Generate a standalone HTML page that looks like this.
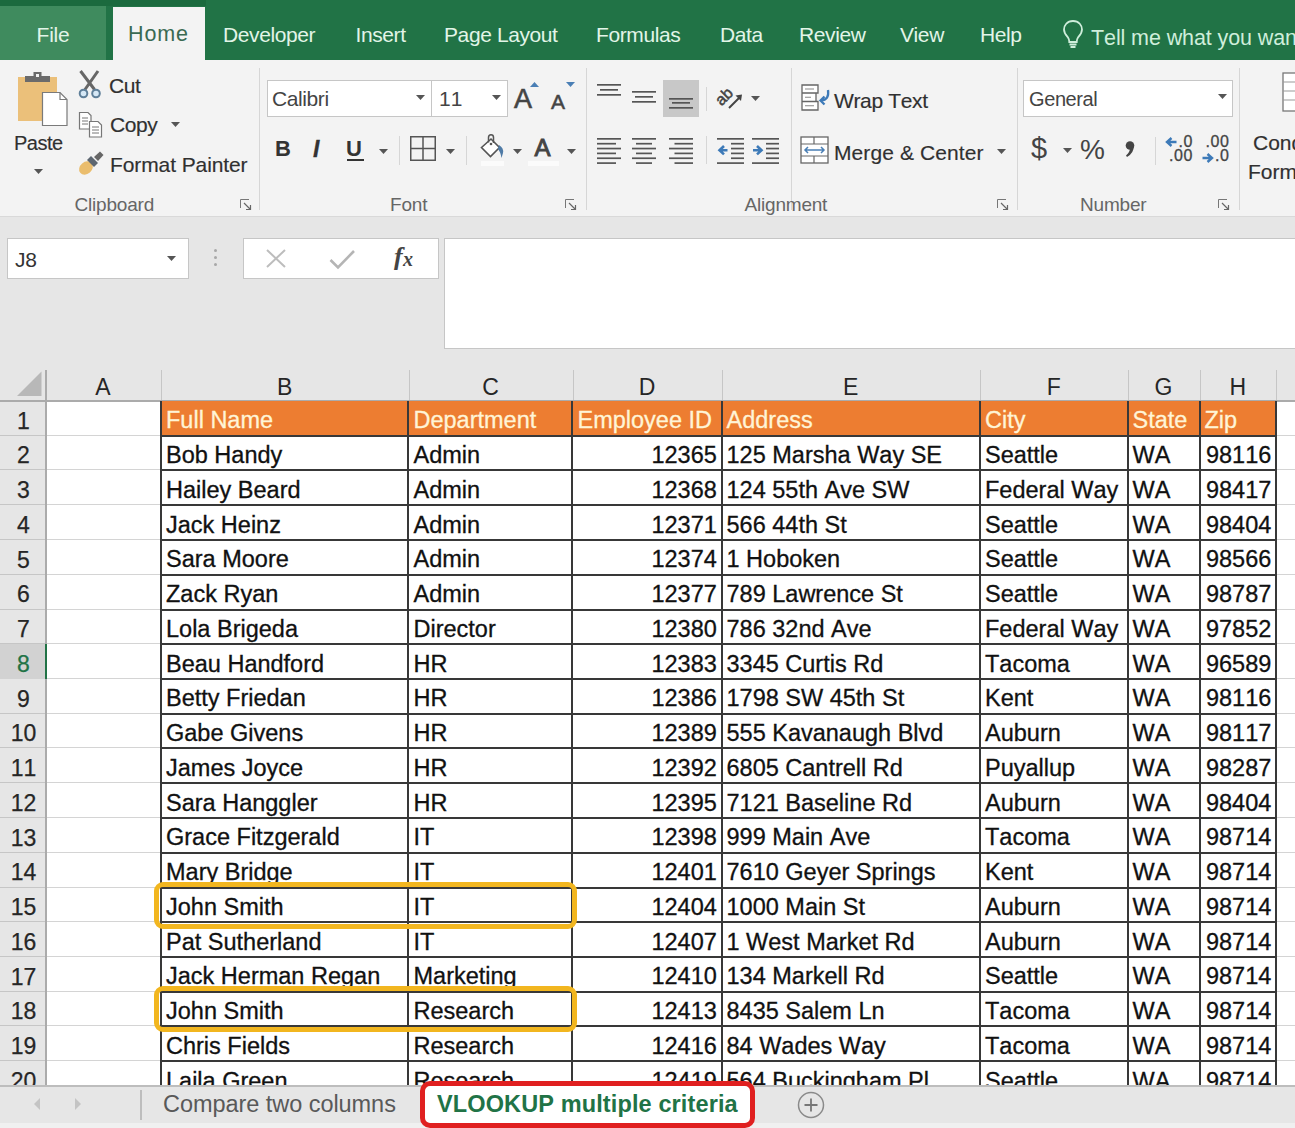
<!DOCTYPE html><html><head><meta charset="utf-8"><style>
*{margin:0;padding:0;box-sizing:border-box}
html,body{width:1295px;height:1128px;overflow:hidden;background:#e6e6e6;font-family:"Liberation Sans",sans-serif;position:relative}
.a{position:absolute}
.t{position:absolute;white-space:pre;line-height:1;font-kerning:none}
svg{position:absolute;overflow:visible}
</style></head><body>
<div class="a" style="left:0px;top:0px;width:1295px;height:60px;background:#217346"></div>
<div class="a" style="left:0px;top:0px;width:206px;height:6px;background:#1b6a3e"></div>
<div class="a" style="left:0px;top:6px;width:106px;height:54px;background:#3f8b5e"></div>
<div class="a" style="left:0px;top:60px;width:1295px;height:157px;background:#f3f3f3"></div>
<div class="a" style="left:113px;top:7px;width:92px;height:60px;background:#f3f3f3"></div>
<div class="a" style="left:0px;top:216px;width:1295px;height:1px;background:#d9d9d9"></div>
<div class="t" style="left:36.5px;top:23.92px;font-size:21px;color:#e2f5e8;font-weight:400;letter-spacing:-0.2px">File</div>
<div class="t" style="left:128px;top:23.50px;font-size:21.5px;color:#3a6a52;font-weight:400;letter-spacing:0.9px">Home</div>
<div class="t" style="left:223px;top:23.92px;font-size:21px;color:#e2f5e8;font-weight:400;letter-spacing:-0.4px">Developer</div>
<div class="t" style="left:355.5px;top:23.92px;font-size:21px;color:#e2f5e8;font-weight:400;letter-spacing:-0.4px">Insert</div>
<div class="t" style="left:444px;top:23.92px;font-size:21px;color:#e2f5e8;font-weight:400;letter-spacing:-0.4px">Page Layout</div>
<div class="t" style="left:596px;top:23.92px;font-size:21px;color:#e2f5e8;font-weight:400;letter-spacing:-0.4px">Formulas</div>
<div class="t" style="left:720px;top:23.92px;font-size:21px;color:#e2f5e8;font-weight:400;letter-spacing:-0.4px">Data</div>
<div class="t" style="left:799px;top:23.92px;font-size:21px;color:#e2f5e8;font-weight:400;letter-spacing:-0.4px">Review</div>
<div class="t" style="left:900px;top:23.92px;font-size:21px;color:#e2f5e8;font-weight:400;letter-spacing:-0.4px">View</div>
<div class="t" style="left:980px;top:23.92px;font-size:21px;color:#e2f5e8;font-weight:400;letter-spacing:-0.4px">Help</div>
<div class="t" style="left:1091px;top:27.80px;font-size:21.5px;color:#cfeedb;font-weight:400;letter-spacing:-0.1px">Tell me what you want to do</div>
<svg style="left:1060px;top:18px" width="26" height="32" viewBox="0 0 26 32"><path d="M13 3 C7 3 4 7.5 4 11.5 C4 15 6 17 8 19.5 C9 21 9.3 22 9.3 24 L16.7 24 C16.7 22 17 21 18 19.5 C20 17 22 15 22 11.5 C22 7.5 19 3 13 3 Z" fill="none" stroke="#cfeedb" stroke-width="1.8"/><path d="M9.5 26.5 H16.5 M10.5 29 H15.5" stroke="#cfeedb" stroke-width="1.8"/></svg>
<div class="a" style="left:259px;top:68px;width:1px;height:142px;background:#d6d6d6"></div>
<div class="a" style="left:585.5px;top:68px;width:1px;height:142px;background:#d6d6d6"></div>
<div class="a" style="left:790.5px;top:68px;width:1px;height:142px;background:#d6d6d6"></div>
<div class="a" style="left:1017px;top:68px;width:1px;height:142px;background:#d6d6d6"></div>
<div class="a" style="left:1239px;top:68px;width:1px;height:142px;background:#d6d6d6"></div>
<svg style="left:14px;top:68px" width="60" height="62" viewBox="0 0 60 62"><rect x="4" y="9" width="39" height="44" fill="#ebc07a"/><rect x="11" y="8" width="25" height="6" fill="#6b6b6b"/><rect x="19.5" y="4" width="8" height="6" fill="#6b6b6b"/><rect x="22" y="6" width="3" height="3" fill="#f3f3f3"/><path d="M28.5 24.5 H46 L53 31.5 V57.5 H28.5 Z" fill="#fff" stroke="#7a7a7a" stroke-width="1.2"/><path d="M46 24.5 V31.5 H53" fill="none" stroke="#7a7a7a" stroke-width="1.2"/></svg>
<div class="t" style="left:14px;top:133.07px;font-size:20px;color:#303030;font-weight:400;-webkit-text-stroke:0.15px #303030;letter-spacing:-0.5px">Paste</div>
<svg style="left:34px;top:168.5px" width="10" height="6" viewBox="0 0 10 6"><path d="M0 0 H9 L4.5 5 Z" fill="#555"/></svg>
<svg style="left:77px;top:70px" width="26" height="30" viewBox="0 0 26 30"><path d="M3.5 1 L17.5 19.5 M21 1 L8 19.5" stroke="#666" stroke-width="3" fill="none"/><circle cx="6.5" cy="23.5" r="3.8" fill="#d6e8f6" stroke="#5f7f99" stroke-width="2"/><circle cx="19" cy="23.5" r="3.8" fill="#d6e8f6" stroke="#5f7f99" stroke-width="2"/></svg>
<div class="t" style="left:109px;top:75.22px;font-size:21px;color:#303030;font-weight:400;-webkit-text-stroke:0.15px #303030;letter-spacing:-0.4px">Cut</div>
<svg style="left:78px;top:111px" width="28" height="28" viewBox="0 0 28 28"><path d="M1.5 1.5 H10 L13 4.5 V18 H1.5 Z" fill="#fff" stroke="#777" stroke-width="1.2"/><path d="M4 7 H10 M4 10 H10 M4 13 H10" stroke="#777" stroke-width="1"/><path d="M11.5 10.5 H20 L23.5 14 V26 H11.5 Z" fill="#fff" stroke="#777" stroke-width="1.2"/><path d="M14 16 H21 M14 19 H21 M14 22 H21" stroke="#777" stroke-width="1"/></svg>
<div class="t" style="left:110px;top:114.22px;font-size:21px;color:#303030;font-weight:400;-webkit-text-stroke:0.15px #303030;letter-spacing:-0.4px">Copy</div>
<svg style="left:171px;top:122px" width="10" height="6" viewBox="0 0 10 6"><path d="M0 0 H9 L4.5 5 Z" fill="#555"/></svg>
<svg style="left:78px;top:151px" width="28" height="26" viewBox="0 0 28 26"><ellipse cx="8" cy="17" rx="7.5" ry="6" transform="rotate(-40 8 17)" fill="#eabd6d"/><path d="M9 9 L16 16 L20 12 L13 5 Z" fill="#5d6670"/><path d="M16 6 L22 0.5 L25.5 4 L20 10 Z" fill="#666"/></svg>
<div class="t" style="left:110px;top:154.22px;font-size:21px;color:#303030;font-weight:400;-webkit-text-stroke:0.15px #303030;letter-spacing:-0.1px">Format Painter</div>
<div class="t" style="left:74.5px;top:194.51px;font-size:19px;color:#666;font-weight:400;letter-spacing:-0.2px">Clipboard</div>
<svg style="left:240px;top:199px" width="12" height="12" viewBox="0 0 12 12"><path d="M0.5 9 V0.5 H9" fill="none" stroke="#777" stroke-width="1"/><path d="M4 4 L10.5 10.5 M6 10.5 H10.5 V6" fill="none" stroke="#666" stroke-width="1.2"/></svg>
<div class="a" style="left:266.5px;top:79.5px;width:165px;height:37px;background:#fff;border:1px solid #c6c6c6"></div>
<div class="a" style="left:431px;top:79.5px;width:77px;height:37px;background:#fff;border:1px solid #c6c6c6"></div>
<div class="t" style="left:272px;top:88.22px;font-size:21px;color:#444;font-weight:400;letter-spacing:-0.4px">Calibri</div>
<div class="t" style="left:439px;top:88.22px;font-size:21px;color:#444;font-weight:400;">11</div>
<svg style="left:415.5px;top:94.5px" width="10" height="6" viewBox="0 0 10 6"><path d="M0 0 H9 L4.5 5 Z" fill="#555"/></svg>
<svg style="left:492.0px;top:94.5px" width="10" height="6" viewBox="0 0 10 6"><path d="M0 0 H9 L4.5 5 Z" fill="#555"/></svg>
<div class="t" style="left:514px;top:85.74px;font-size:27px;color:#444;font-weight:400;-webkit-text-stroke:0.6px #444">A</div>
<svg style="left:530px;top:82px" width="10" height="6" viewBox="0 0 10 6"><path d="M0 5 L4.5 0 L9 5 Z" fill="#4a7fb5"/></svg>
<div class="t" style="left:551px;top:90.82px;font-size:21px;color:#444;font-weight:400;-webkit-text-stroke:0.5px #444">A</div>
<svg style="left:566px;top:82px" width="10" height="6" viewBox="0 0 10 6"><path d="M0 0 H9 L4.5 5 Z" fill="#4a7fb5"/></svg>
<div class="t" style="left:275px;top:138.37px;font-size:22px;color:#333;font-weight:700;">B</div>
<div class="t" style="left:313px;top:137.53px;font-size:23px;color:#333;font-weight:700;font-style:italic;-webkit-text-stroke:0.3px #333">I</div>
<div class="t" style="left:346px;top:138.37px;font-size:22px;color:#333;font-weight:700;">U</div>
<div class="a" style="left:347px;top:159px;width:17px;height:2px;background:#333"></div>
<svg style="left:378.5px;top:148.5px" width="10" height="6" viewBox="0 0 10 6"><path d="M0 0 H9 L4.5 5 Z" fill="#555"/></svg>
<div class="a" style="left:398.5px;top:136px;width:1px;height:29px;background:#d6d6d6"></div>
<svg style="left:410px;top:136px" width="27" height="26" viewBox="0 0 27 26"><rect x="0.75" y="0.75" width="24.5" height="23.5" fill="none" stroke="#555" stroke-width="1.5"/><path d="M13 1 V24 M1 12.5 H25" stroke="#555" stroke-width="1.5"/></svg>
<svg style="left:446.0px;top:148.5px" width="10" height="6" viewBox="0 0 10 6"><path d="M0 0 H9 L4.5 5 Z" fill="#555"/></svg>
<div class="a" style="left:466px;top:136px;width:1px;height:29px;background:#d6d6d6"></div>
<svg style="left:480px;top:134px" width="26" height="30" viewBox="0 0 26 30"><path d="M1.5 13.5 L11 5 L19.5 13.5 L10.5 22.5 Z" fill="#fff" stroke="#555" stroke-width="1.6"/><path d="M8.5 8.5 V3.5 Q8.5 0.8 11 0.8 Q13.5 0.8 13.5 3.5 V9" fill="none" stroke="#555" stroke-width="1.5"/><circle cx="11" cy="10" r="1.3" fill="#555"/><path d="M19 11 Q24 14 23 19 L21.5 24 Q20.5 18 18 15 Z" fill="#4f7ba6"/></svg>
<div class="a" style="left:481px;top:161px;width:23px;height:5px;background:#fbfbfb"></div>
<svg style="left:513.0px;top:148.5px" width="10" height="6" viewBox="0 0 10 6"><path d="M0 0 H9 L4.5 5 Z" fill="#555"/></svg>
<div class="t" style="left:534.5px;top:135.68px;font-size:24px;color:#444;font-weight:400;-webkit-text-stroke:0.9px #444">A</div>
<div class="a" style="left:528px;top:161px;width:31px;height:5px;background:#fbfbfb"></div>
<svg style="left:567.0px;top:148.5px" width="10" height="6" viewBox="0 0 10 6"><path d="M0 0 H9 L4.5 5 Z" fill="#555"/></svg>
<div class="t" style="left:390px;top:194.91px;font-size:19px;color:#666;font-weight:400;letter-spacing:-0.2px">Font</div>
<svg style="left:565px;top:199px" width="12" height="12" viewBox="0 0 12 12"><path d="M0.5 9 V0.5 H9" fill="none" stroke="#777" stroke-width="1"/><path d="M4 4 L10.5 10.5 M6 10.5 H10.5 V6" fill="none" stroke="#666" stroke-width="1.2"/></svg>
<svg style="left:597px;top:83px" width="40" height="40" viewBox="0 0 40 40"><rect x="0" y="1" width="24" height="1.7" fill="#555"/><rect x="3" y="6" width="18" height="1.7" fill="#555"/><rect x="0" y="11" width="24" height="1.7" fill="#555"/></svg>
<svg style="left:632px;top:90px" width="40" height="40" viewBox="0 0 40 40"><rect x="0" y="1" width="24" height="1.7" fill="#555"/><rect x="3" y="6" width="18" height="1.7" fill="#555"/><rect x="0" y="11" width="24" height="1.7" fill="#555"/></svg>
<div class="a" style="left:663px;top:79.5px;width:36px;height:37px;background:#c8c8c8"></div>
<svg style="left:669px;top:97px" width="40" height="40" viewBox="0 0 40 40"><rect x="0" y="1" width="24" height="1.7" fill="#555"/><rect x="3" y="5" width="18" height="1.7" fill="#555"/><rect x="0" y="10" width="24" height="1.7" fill="#555"/></svg>
<div class="a" style="left:705.5px;top:87px;width:1px;height:24px;background:#d6d6d6"></div>
<svg style="left:716px;top:84px" width="30" height="30" viewBox="0 0 30 30"><text x="0" y="0" font-size="16" font-family="Liberation Sans" fill="#444" stroke="#444" stroke-width="0.5" transform="translate(5.5,22.5) rotate(-45)">ab</text><path d="M13 24 L24.5 12.5" fill="none" stroke="#444" stroke-width="2"/><path d="M19.5 11.5 L26 10.5 L25 17 Z" fill="#444"/></svg>
<svg style="left:750.5px;top:95.5px" width="10" height="6" viewBox="0 0 10 6"><path d="M0 0 H9 L4.5 5 Z" fill="#555"/></svg>
<svg style="left:597px;top:137.5px" width="40" height="40" viewBox="0 0 40 40"><rect x="0" y="0" width="24" height="1.7" fill="#555"/><rect x="0" y="4.85" width="19" height="1.7" fill="#555"/><rect x="0" y="9.7" width="24" height="1.7" fill="#555"/><rect x="0" y="14.55" width="19" height="1.7" fill="#555"/><rect x="0" y="19.4" width="24" height="1.7" fill="#555"/><rect x="0" y="24.25" width="19" height="1.7" fill="#555"/></svg>
<svg style="left:632px;top:137.5px" width="40" height="40" viewBox="0 0 40 40"><rect x="0" y="0" width="24" height="1.7" fill="#555"/><rect x="4" y="4.85" width="16" height="1.7" fill="#555"/><rect x="0" y="9.7" width="24" height="1.7" fill="#555"/><rect x="4" y="14.55" width="16" height="1.7" fill="#555"/><rect x="0" y="19.4" width="24" height="1.7" fill="#555"/><rect x="4" y="24.25" width="16" height="1.7" fill="#555"/></svg>
<svg style="left:669px;top:137.5px" width="40" height="40" viewBox="0 0 40 40"><rect x="0" y="0" width="24" height="1.7" fill="#555"/><rect x="5.5" y="4.85" width="18.5" height="1.7" fill="#555"/><rect x="0" y="9.7" width="24" height="1.7" fill="#555"/><rect x="5.5" y="14.55" width="18.5" height="1.7" fill="#555"/><rect x="0" y="19.4" width="24" height="1.7" fill="#555"/><rect x="5.5" y="24.25" width="18.5" height="1.7" fill="#555"/></svg>
<div class="a" style="left:705.5px;top:136px;width:1px;height:28px;background:#d6d6d6"></div>
<svg style="left:716.5px;top:137.5px" width="30" height="26" viewBox="0 0 30 26"><rect x="0" y="0" width="27" height="1.7" fill="#555"/><rect x="14" y="4.85" width="13" height="1.7" fill="#555"/><rect x="14" y="9.7" width="13" height="1.7" fill="#555"/><rect x="14" y="14.55" width="13" height="1.7" fill="#555"/><rect x="14" y="19.4" width="13" height="1.7" fill="#555"/><rect x="0" y="24.25" width="27" height="1.7" fill="#555"/><path d="M10.5 12.2 H3 M7 8 L2.5 12.2 L7 16.4" fill="none" stroke="#3d7ab8" stroke-width="2.6"/></svg>
<svg style="left:752px;top:137.5px" width="30" height="26" viewBox="0 0 30 26"><rect x="0" y="0" width="27" height="1.7" fill="#555"/><rect x="14" y="4.85" width="13" height="1.7" fill="#555"/><rect x="14" y="9.7" width="13" height="1.7" fill="#555"/><rect x="14" y="14.55" width="13" height="1.7" fill="#555"/><rect x="14" y="19.4" width="13" height="1.7" fill="#555"/><rect x="0" y="24.25" width="27" height="1.7" fill="#555"/><path d="M1 12.2 H9 M5 8 L9.5 12.2 L5 16.4" fill="none" stroke="#3d7ab8" stroke-width="2.6"/></svg>
<svg style="left:801px;top:84px" width="32" height="30" viewBox="0 0 32 30"><path d="M1 1 H17 V9 H1 Z M1 9 H15 V17.5 H1 Z M1 17.5 H17 V26 H1 Z" fill="#fff" stroke="#666" stroke-width="1.3"/><path d="M4 5 H13 M4 13.2 H10 M4 21.7 H13" stroke="#888" stroke-width="1.1"/><path d="M27 6 Q28.5 16 20 16.5 M23.5 12.5 L19.5 16.5 L23.5 20.5" fill="none" stroke="#3d7ab8" stroke-width="2.3"/></svg>
<div class="t" style="left:834px;top:89.82px;font-size:21px;color:#303030;font-weight:400;-webkit-text-stroke:0.15px #303030;letter-spacing:-0.35px">Wrap Text</div>
<svg style="left:800px;top:136px" width="30" height="29" viewBox="0 0 30 29"><rect x="1" y="1" width="27" height="26" fill="#fff" stroke="#666" stroke-width="1.3"/><path d="M1 8 H28 M1 20 H28 M14 1 V8 M14 20 V27" stroke="#666" stroke-width="1.2"/><path d="M5 14 H24 M8 11 L5 14 L8 17 M21 11 L24 14 L21 17" fill="none" stroke="#4a7fb5" stroke-width="1.5"/></svg>
<div class="t" style="left:834px;top:142.42px;font-size:21px;color:#303030;font-weight:400;-webkit-text-stroke:0.15px #303030;letter-spacing:0.1px">Merge &amp; Center</div>
<svg style="left:996.5px;top:148.5px" width="10" height="6" viewBox="0 0 10 6"><path d="M0 0 H9 L4.5 5 Z" fill="#555"/></svg>
<div class="t" style="left:744.5px;top:194.91px;font-size:19px;color:#666;font-weight:400;letter-spacing:-0.2px">Alignment</div>
<svg style="left:997px;top:199px" width="12" height="12" viewBox="0 0 12 12"><path d="M0.5 9 V0.5 H9" fill="none" stroke="#777" stroke-width="1"/><path d="M4 4 L10.5 10.5 M6 10.5 H10.5 V6" fill="none" stroke="#666" stroke-width="1.2"/></svg>
<div class="a" style="left:1023px;top:79.5px;width:210px;height:37.5px;background:#fff;border:1px solid #c6c6c6"></div>
<div class="t" style="left:1029px;top:89.27px;font-size:20px;color:#444;font-weight:400;letter-spacing:-0.4px">General</div>
<svg style="left:1218.0px;top:94.0px" width="10" height="6" viewBox="0 0 10 6"><path d="M0 0 H9 L4.5 5 Z" fill="#555"/></svg>
<div class="t" style="left:1031px;top:133.95px;font-size:29px;color:#444;font-weight:400;">$</div>
<svg style="left:1063.0px;top:147.5px" width="10" height="6" viewBox="0 0 10 6"><path d="M0 0 H9 L4.5 5 Z" fill="#555"/></svg>
<div class="t" style="left:1080px;top:136.29px;font-size:28px;color:#444;font-weight:400;">%</div>
<svg style="left:1122px;top:140px" width="16" height="20" viewBox="0 0 16 20"><circle cx="8" cy="5.5" r="4.3" fill="#444"/><path d="M11.8 6 Q12 13 5 17 L4 15.5 Q8 12 8 8 Z" fill="#444"/></svg>
<div class="a" style="left:1155px;top:137px;width:1px;height:28px;background:#d6d6d6"></div>
<svg style="left:1165px;top:134px" width="30" height="30" viewBox="0 0 30 30"><path d="M11.5 8 H2.5 M6.5 4 L2 8 L6.5 12" fill="none" stroke="#3d7ab8" stroke-width="2.4"/></svg>
<div class="t" style="right:102px;top:133.95px;font-size:16px;color:#444;font-weight:400;letter-spacing:0.6px;-webkit-text-stroke:0.3px #444">.0</div>
<div class="t" style="right:102px;top:148.45px;font-size:16px;color:#444;font-weight:400;letter-spacing:0.6px;-webkit-text-stroke:0.3px #444">.00</div>
<div class="t" style="right:65.5px;top:133.95px;font-size:16px;color:#444;font-weight:400;letter-spacing:0.6px;-webkit-text-stroke:0.3px #444">.00</div>
<svg style="left:1201px;top:150px" width="30" height="30" viewBox="0 0 30 30"><path d="M1.5 8 H10.5 M6.5 4 L11 8 L6.5 12" fill="none" stroke="#3d7ab8" stroke-width="2.4"/></svg>
<div class="t" style="right:65.5px;top:148.45px;font-size:16px;color:#444;font-weight:400;letter-spacing:0.6px;-webkit-text-stroke:0.3px #444">.0</div>
<div class="t" style="left:1080px;top:194.61px;font-size:19px;color:#666;font-weight:400;letter-spacing:-0.2px">Number</div>
<svg style="left:1218px;top:199px" width="12" height="12" viewBox="0 0 12 12"><path d="M0.5 9 V0.5 H9" fill="none" stroke="#777" stroke-width="1"/><path d="M4 4 L10.5 10.5 M6 10.5 H10.5 V6" fill="none" stroke="#666" stroke-width="1.2"/></svg>
<svg style="left:1282px;top:72px" width="30" height="40" viewBox="0 0 30 40"><rect x="1" y="1" width="24" height="38" fill="#fff" stroke="#777" stroke-width="1.3"/><path d="M1 10 H25 M1 19 H25 M1 28 H25" stroke="#999" stroke-width="1"/></svg>
<div class="t" style="left:1253px;top:132.22px;font-size:21px;color:#303030;font-weight:400;-webkit-text-stroke:0.15px #303030">Cond</div>
<div class="t" style="left:1248px;top:161.02px;font-size:21px;color:#303030;font-weight:400;-webkit-text-stroke:0.15px #303030">Form</div>
<div class="a" style="left:7px;top:237.5px;width:182px;height:41.5px;background:#fff;border:1px solid #c6c6c6"></div>
<div class="t" style="left:15px;top:249.22px;font-size:21px;color:#333;font-weight:400;letter-spacing:-0.3px">J8</div>
<svg style="left:167.0px;top:255.5px" width="10" height="6" viewBox="0 0 10 6"><path d="M0 0 H9 L4.5 5 Z" fill="#555"/></svg>
<div class="a" style="left:213.5px;top:248.5px;width:3px;height:3px;background:#a8a8a8;border-radius:50%"></div>
<div class="a" style="left:213.5px;top:255.5px;width:3px;height:3px;background:#a8a8a8;border-radius:50%"></div>
<div class="a" style="left:213.5px;top:262.5px;width:3px;height:3px;background:#a8a8a8;border-radius:50%"></div>
<div class="a" style="left:243px;top:237.5px;width:196px;height:41.5px;background:#fff;border:1px solid #c6c6c6"></div>
<svg style="left:266px;top:249px" width="20" height="19" viewBox="0 0 20 19"><path d="M1 1 L19 18 M19 1 L1 18" stroke="#bdbdbd" stroke-width="2"/></svg>
<svg style="left:329px;top:249px" width="27" height="21" viewBox="0 0 27 21"><path d="M1.5 11 L9 18.5 L25 2" fill="none" stroke="#b5b5b5" stroke-width="2.6"/></svg>
<div class="t" style="left:394px;top:243.99px;font-size:26px;color:#444;font-weight:700;font-family:Liberation Serif;font-style:italic">f</div>
<div class="t" style="left:403px;top:248.57px;font-size:20px;color:#444;font-weight:700;font-family:Liberation Serif;font-style:italic">x</div>
<div class="a" style="left:444px;top:237.5px;width:860px;height:111px;background:#fff;border:1px solid #c6c6c6"></div>
<div class="a" style="left:0px;top:370px;width:1295px;height:715px;background:#fff"></div>
<div class="a" style="left:0px;top:370px;width:1295px;height:31px;background:#e6e6e6"></div>
<div class="a" style="left:0px;top:370px;width:45px;height:715px;background:#e6e6e6"></div>
<svg style="left:17px;top:371px" width="26" height="26" viewBox="0 0 26 26"><path d="M24.5 0.5 V25 H0 Z" fill="#b8b8b8"/></svg>
<div class="a" style="left:45px;top:370px;width:1px;height:31px;background:#c6c6c6"></div>
<div class="a" style="left:161px;top:370px;width:1px;height:31px;background:#c6c6c6"></div>
<div class="a" style="left:408.5px;top:370px;width:1px;height:31px;background:#c6c6c6"></div>
<div class="a" style="left:572.5px;top:370px;width:1px;height:31px;background:#c6c6c6"></div>
<div class="a" style="left:721.5px;top:370px;width:1px;height:31px;background:#c6c6c6"></div>
<div class="a" style="left:980px;top:370px;width:1px;height:31px;background:#c6c6c6"></div>
<div class="a" style="left:1127.5px;top:370px;width:1px;height:31px;background:#c6c6c6"></div>
<div class="a" style="left:1199.5px;top:370px;width:1px;height:31px;background:#c6c6c6"></div>
<div class="a" style="left:1276px;top:370px;width:1px;height:31px;background:#c6c6c6"></div>
<div class="t" style="left:-97.0px;width:400px;text-align:center;top:375.53px;font-size:23px;color:#262626;font-weight:400;">A</div>
<div class="t" style="left:84.75px;width:400px;text-align:center;top:375.53px;font-size:23px;color:#262626;font-weight:400;">B</div>
<div class="t" style="left:290.5px;width:400px;text-align:center;top:375.53px;font-size:23px;color:#262626;font-weight:400;">C</div>
<div class="t" style="left:447.0px;width:400px;text-align:center;top:375.53px;font-size:23px;color:#262626;font-weight:400;">D</div>
<div class="t" style="left:650.75px;width:400px;text-align:center;top:375.53px;font-size:23px;color:#262626;font-weight:400;">E</div>
<div class="t" style="left:853.75px;width:400px;text-align:center;top:375.53px;font-size:23px;color:#262626;font-weight:400;">F</div>
<div class="t" style="left:963.5px;width:400px;text-align:center;top:375.53px;font-size:23px;color:#262626;font-weight:400;">G</div>
<div class="t" style="left:1037.75px;width:400px;text-align:center;top:375.53px;font-size:23px;color:#262626;font-weight:400;">H</div>
<div class="a" style="left:0px;top:400px;width:1295px;height:1.5px;background:#ababab"></div>
<div class="a" style="left:45px;top:370px;width:1.5px;height:715px;background:#ababab"></div>
<div class="a" style="left:46.5px;top:435px;width:114.5px;height:1px;background:#d4d4d4"></div>
<div class="a" style="left:1276px;top:435px;width:20px;height:1px;background:#d4d4d4"></div>
<div class="a" style="left:0px;top:435px;width:45px;height:1px;background:#c6c6c6"></div>
<div class="a" style="left:46.5px;top:469px;width:114.5px;height:1px;background:#d4d4d4"></div>
<div class="a" style="left:1276px;top:469px;width:20px;height:1px;background:#d4d4d4"></div>
<div class="a" style="left:0px;top:469px;width:45px;height:1px;background:#c6c6c6"></div>
<div class="a" style="left:46.5px;top:504px;width:114.5px;height:1px;background:#d4d4d4"></div>
<div class="a" style="left:1276px;top:504px;width:20px;height:1px;background:#d4d4d4"></div>
<div class="a" style="left:0px;top:504px;width:45px;height:1px;background:#c6c6c6"></div>
<div class="a" style="left:46.5px;top:539px;width:114.5px;height:1px;background:#d4d4d4"></div>
<div class="a" style="left:1276px;top:539px;width:20px;height:1px;background:#d4d4d4"></div>
<div class="a" style="left:0px;top:539px;width:45px;height:1px;background:#c6c6c6"></div>
<div class="a" style="left:46.5px;top:574px;width:114.5px;height:1px;background:#d4d4d4"></div>
<div class="a" style="left:1276px;top:574px;width:20px;height:1px;background:#d4d4d4"></div>
<div class="a" style="left:0px;top:574px;width:45px;height:1px;background:#c6c6c6"></div>
<div class="a" style="left:46.5px;top:609px;width:114.5px;height:1px;background:#d4d4d4"></div>
<div class="a" style="left:1276px;top:609px;width:20px;height:1px;background:#d4d4d4"></div>
<div class="a" style="left:0px;top:609px;width:45px;height:1px;background:#c6c6c6"></div>
<div class="a" style="left:46.5px;top:643px;width:114.5px;height:1px;background:#d4d4d4"></div>
<div class="a" style="left:1276px;top:643px;width:20px;height:1px;background:#d4d4d4"></div>
<div class="a" style="left:0px;top:643px;width:45px;height:1px;background:#c6c6c6"></div>
<div class="a" style="left:46.5px;top:678px;width:114.5px;height:1px;background:#d4d4d4"></div>
<div class="a" style="left:1276px;top:678px;width:20px;height:1px;background:#d4d4d4"></div>
<div class="a" style="left:0px;top:678px;width:45px;height:1px;background:#c6c6c6"></div>
<div class="a" style="left:46.5px;top:713px;width:114.5px;height:1px;background:#d4d4d4"></div>
<div class="a" style="left:1276px;top:713px;width:20px;height:1px;background:#d4d4d4"></div>
<div class="a" style="left:0px;top:713px;width:45px;height:1px;background:#c6c6c6"></div>
<div class="a" style="left:46.5px;top:747px;width:114.5px;height:1px;background:#d4d4d4"></div>
<div class="a" style="left:1276px;top:747px;width:20px;height:1px;background:#d4d4d4"></div>
<div class="a" style="left:0px;top:747px;width:45px;height:1px;background:#c6c6c6"></div>
<div class="a" style="left:46.5px;top:782px;width:114.5px;height:1px;background:#d4d4d4"></div>
<div class="a" style="left:1276px;top:782px;width:20px;height:1px;background:#d4d4d4"></div>
<div class="a" style="left:0px;top:782px;width:45px;height:1px;background:#c6c6c6"></div>
<div class="a" style="left:46.5px;top:817px;width:114.5px;height:1px;background:#d4d4d4"></div>
<div class="a" style="left:1276px;top:817px;width:20px;height:1px;background:#d4d4d4"></div>
<div class="a" style="left:0px;top:817px;width:45px;height:1px;background:#c6c6c6"></div>
<div class="a" style="left:46.5px;top:852px;width:114.5px;height:1px;background:#d4d4d4"></div>
<div class="a" style="left:1276px;top:852px;width:20px;height:1px;background:#d4d4d4"></div>
<div class="a" style="left:0px;top:852px;width:45px;height:1px;background:#c6c6c6"></div>
<div class="a" style="left:46.5px;top:887px;width:114.5px;height:1px;background:#d4d4d4"></div>
<div class="a" style="left:1276px;top:887px;width:20px;height:1px;background:#d4d4d4"></div>
<div class="a" style="left:0px;top:887px;width:45px;height:1px;background:#c6c6c6"></div>
<div class="a" style="left:46.5px;top:921px;width:114.5px;height:1px;background:#d4d4d4"></div>
<div class="a" style="left:1276px;top:921px;width:20px;height:1px;background:#d4d4d4"></div>
<div class="a" style="left:0px;top:921px;width:45px;height:1px;background:#c6c6c6"></div>
<div class="a" style="left:46.5px;top:956px;width:114.5px;height:1px;background:#d4d4d4"></div>
<div class="a" style="left:1276px;top:956px;width:20px;height:1px;background:#d4d4d4"></div>
<div class="a" style="left:0px;top:956px;width:45px;height:1px;background:#c6c6c6"></div>
<div class="a" style="left:46.5px;top:991px;width:114.5px;height:1px;background:#d4d4d4"></div>
<div class="a" style="left:1276px;top:991px;width:20px;height:1px;background:#d4d4d4"></div>
<div class="a" style="left:0px;top:991px;width:45px;height:1px;background:#c6c6c6"></div>
<div class="a" style="left:46.5px;top:1025px;width:114.5px;height:1px;background:#d4d4d4"></div>
<div class="a" style="left:1276px;top:1025px;width:20px;height:1px;background:#d4d4d4"></div>
<div class="a" style="left:0px;top:1025px;width:45px;height:1px;background:#c6c6c6"></div>
<div class="a" style="left:46.5px;top:1060px;width:114.5px;height:1px;background:#d4d4d4"></div>
<div class="a" style="left:1276px;top:1060px;width:20px;height:1px;background:#d4d4d4"></div>
<div class="a" style="left:0px;top:1060px;width:45px;height:1px;background:#c6c6c6"></div>
<div class="a" style="left:46.5px;top:1095px;width:114.5px;height:1px;background:#d4d4d4"></div>
<div class="a" style="left:1276px;top:1095px;width:20px;height:1px;background:#d4d4d4"></div>
<div class="a" style="left:0px;top:1095px;width:45px;height:1px;background:#c6c6c6"></div>
<div class="t" style="left:-176.5px;width:400px;text-align:center;top:409.53px;font-size:23px;color:#262626;font-weight:400;-webkit-text-stroke:0.25px #262626">1</div>
<div class="t" style="left:-176.5px;width:400px;text-align:center;top:444.28px;font-size:23px;color:#262626;font-weight:400;-webkit-text-stroke:0.25px #262626">2</div>
<div class="t" style="left:-176.5px;width:400px;text-align:center;top:479.03px;font-size:23px;color:#262626;font-weight:400;-webkit-text-stroke:0.25px #262626">3</div>
<div class="t" style="left:-176.5px;width:400px;text-align:center;top:513.78px;font-size:23px;color:#262626;font-weight:400;-webkit-text-stroke:0.25px #262626">4</div>
<div class="t" style="left:-176.5px;width:400px;text-align:center;top:548.53px;font-size:23px;color:#262626;font-weight:400;-webkit-text-stroke:0.25px #262626">5</div>
<div class="t" style="left:-176.5px;width:400px;text-align:center;top:583.28px;font-size:23px;color:#262626;font-weight:400;-webkit-text-stroke:0.25px #262626">6</div>
<div class="t" style="left:-176.5px;width:400px;text-align:center;top:618.03px;font-size:23px;color:#262626;font-weight:400;-webkit-text-stroke:0.25px #262626">7</div>
<div class="a" style="left:0px;top:644.25px;width:45px;height:34.75px;background:#d2d2d2"></div>
<div class="a" style="left:44.5px;top:644.25px;width:2.5px;height:34.75px;background:#217346"></div>
<div class="t" style="left:-176.5px;width:400px;text-align:center;top:652.78px;font-size:23px;color:#217346;font-weight:400;-webkit-text-stroke:0.25px #217346">8</div>
<div class="t" style="left:-176.5px;width:400px;text-align:center;top:687.53px;font-size:23px;color:#262626;font-weight:400;-webkit-text-stroke:0.25px #262626">9</div>
<div class="t" style="left:-176.5px;width:400px;text-align:center;top:722.28px;font-size:23px;color:#262626;font-weight:400;-webkit-text-stroke:0.25px #262626">10</div>
<div class="t" style="left:-176.5px;width:400px;text-align:center;top:757.03px;font-size:23px;color:#262626;font-weight:400;-webkit-text-stroke:0.25px #262626">11</div>
<div class="t" style="left:-176.5px;width:400px;text-align:center;top:791.78px;font-size:23px;color:#262626;font-weight:400;-webkit-text-stroke:0.25px #262626">12</div>
<div class="t" style="left:-176.5px;width:400px;text-align:center;top:826.53px;font-size:23px;color:#262626;font-weight:400;-webkit-text-stroke:0.25px #262626">13</div>
<div class="t" style="left:-176.5px;width:400px;text-align:center;top:861.28px;font-size:23px;color:#262626;font-weight:400;-webkit-text-stroke:0.25px #262626">14</div>
<div class="t" style="left:-176.5px;width:400px;text-align:center;top:896.03px;font-size:23px;color:#262626;font-weight:400;-webkit-text-stroke:0.25px #262626">15</div>
<div class="t" style="left:-176.5px;width:400px;text-align:center;top:930.78px;font-size:23px;color:#262626;font-weight:400;-webkit-text-stroke:0.25px #262626">16</div>
<div class="t" style="left:-176.5px;width:400px;text-align:center;top:965.53px;font-size:23px;color:#262626;font-weight:400;-webkit-text-stroke:0.25px #262626">17</div>
<div class="t" style="left:-176.5px;width:400px;text-align:center;top:1000.28px;font-size:23px;color:#262626;font-weight:400;-webkit-text-stroke:0.25px #262626">18</div>
<div class="t" style="left:-176.5px;width:400px;text-align:center;top:1035.03px;font-size:23px;color:#262626;font-weight:400;-webkit-text-stroke:0.25px #262626">19</div>
<div class="t" style="left:-176.5px;width:400px;text-align:center;top:1069.78px;font-size:23px;color:#262626;font-weight:400;-webkit-text-stroke:0.25px #262626">20</div>
<div class="a" style="left:161px;top:401.0px;width:1115px;height:34.75px;background:#ed7d31"></div>
<div class="t" style="left:166px;top:409.40px;font-size:23.5px;color:#fff4d6;font-weight:400;-webkit-text-stroke:0.3px #fff4d6">Full Name</div>
<div class="t" style="left:413.5px;top:409.40px;font-size:23.5px;color:#fff4d6;font-weight:400;-webkit-text-stroke:0.3px #fff4d6">Department</div>
<div class="t" style="left:577.5px;top:409.40px;font-size:23.5px;color:#fff4d6;font-weight:400;-webkit-text-stroke:0.3px #fff4d6">Employee ID</div>
<div class="t" style="left:726.5px;top:409.40px;font-size:23.5px;color:#fff4d6;font-weight:400;-webkit-text-stroke:0.3px #fff4d6">Address</div>
<div class="t" style="left:985px;top:409.40px;font-size:23.5px;color:#fff4d6;font-weight:400;-webkit-text-stroke:0.3px #fff4d6">City</div>
<div class="t" style="left:1132.5px;top:409.40px;font-size:23.5px;color:#fff4d6;font-weight:400;-webkit-text-stroke:0.3px #fff4d6">State</div>
<div class="t" style="left:1204.5px;top:409.40px;font-size:23.5px;color:#fff4d6;font-weight:400;-webkit-text-stroke:0.3px #fff4d6">Zip</div>
<div class="t" style="left:166px;top:444.15px;font-size:23.5px;color:#111;font-weight:400;-webkit-text-stroke:0.3px #111">Bob Handy</div>
<div class="t" style="left:413.5px;top:444.15px;font-size:23.5px;color:#111;font-weight:400;-webkit-text-stroke:0.3px #111">Admin</div>
<div class="t" style="right:578.2px;top:444.15px;font-size:23.5px;color:#111;font-weight:400;-webkit-text-stroke:0.3px #111">12365</div>
<div class="t" style="left:726.5px;top:444.15px;font-size:23.5px;color:#111;font-weight:400;-webkit-text-stroke:0.3px #111">125 Marsha Way SE</div>
<div class="t" style="left:985px;top:444.15px;font-size:23.5px;color:#111;font-weight:400;-webkit-text-stroke:0.3px #111">Seattle</div>
<div class="t" style="left:1132.5px;top:444.15px;font-size:23.5px;color:#111;font-weight:400;-webkit-text-stroke:0.3px #111">WA</div>
<div class="t" style="right:23.700000000000045px;top:444.15px;font-size:23.5px;color:#111;font-weight:400;-webkit-text-stroke:0.3px #111">98116</div>
<div class="t" style="left:166px;top:478.90px;font-size:23.5px;color:#111;font-weight:400;-webkit-text-stroke:0.3px #111">Hailey Beard</div>
<div class="t" style="left:413.5px;top:478.90px;font-size:23.5px;color:#111;font-weight:400;-webkit-text-stroke:0.3px #111">Admin</div>
<div class="t" style="right:578.2px;top:478.90px;font-size:23.5px;color:#111;font-weight:400;-webkit-text-stroke:0.3px #111">12368</div>
<div class="t" style="left:726.5px;top:478.90px;font-size:23.5px;color:#111;font-weight:400;-webkit-text-stroke:0.3px #111">124 55th Ave SW</div>
<div class="t" style="left:985px;top:478.90px;font-size:23.5px;color:#111;font-weight:400;-webkit-text-stroke:0.3px #111">Federal Way</div>
<div class="t" style="left:1132.5px;top:478.90px;font-size:23.5px;color:#111;font-weight:400;-webkit-text-stroke:0.3px #111">WA</div>
<div class="t" style="right:23.700000000000045px;top:478.90px;font-size:23.5px;color:#111;font-weight:400;-webkit-text-stroke:0.3px #111">98417</div>
<div class="t" style="left:166px;top:513.65px;font-size:23.5px;color:#111;font-weight:400;-webkit-text-stroke:0.3px #111">Jack Heinz</div>
<div class="t" style="left:413.5px;top:513.65px;font-size:23.5px;color:#111;font-weight:400;-webkit-text-stroke:0.3px #111">Admin</div>
<div class="t" style="right:578.2px;top:513.65px;font-size:23.5px;color:#111;font-weight:400;-webkit-text-stroke:0.3px #111">12371</div>
<div class="t" style="left:726.5px;top:513.65px;font-size:23.5px;color:#111;font-weight:400;-webkit-text-stroke:0.3px #111">566 44th St</div>
<div class="t" style="left:985px;top:513.65px;font-size:23.5px;color:#111;font-weight:400;-webkit-text-stroke:0.3px #111">Seattle</div>
<div class="t" style="left:1132.5px;top:513.65px;font-size:23.5px;color:#111;font-weight:400;-webkit-text-stroke:0.3px #111">WA</div>
<div class="t" style="right:23.700000000000045px;top:513.65px;font-size:23.5px;color:#111;font-weight:400;-webkit-text-stroke:0.3px #111">98404</div>
<div class="t" style="left:166px;top:548.40px;font-size:23.5px;color:#111;font-weight:400;-webkit-text-stroke:0.3px #111">Sara Moore</div>
<div class="t" style="left:413.5px;top:548.40px;font-size:23.5px;color:#111;font-weight:400;-webkit-text-stroke:0.3px #111">Admin</div>
<div class="t" style="right:578.2px;top:548.40px;font-size:23.5px;color:#111;font-weight:400;-webkit-text-stroke:0.3px #111">12374</div>
<div class="t" style="left:726.5px;top:548.40px;font-size:23.5px;color:#111;font-weight:400;-webkit-text-stroke:0.3px #111">1 Hoboken</div>
<div class="t" style="left:985px;top:548.40px;font-size:23.5px;color:#111;font-weight:400;-webkit-text-stroke:0.3px #111">Seattle</div>
<div class="t" style="left:1132.5px;top:548.40px;font-size:23.5px;color:#111;font-weight:400;-webkit-text-stroke:0.3px #111">WA</div>
<div class="t" style="right:23.700000000000045px;top:548.40px;font-size:23.5px;color:#111;font-weight:400;-webkit-text-stroke:0.3px #111">98566</div>
<div class="t" style="left:166px;top:583.15px;font-size:23.5px;color:#111;font-weight:400;-webkit-text-stroke:0.3px #111">Zack Ryan</div>
<div class="t" style="left:413.5px;top:583.15px;font-size:23.5px;color:#111;font-weight:400;-webkit-text-stroke:0.3px #111">Admin</div>
<div class="t" style="right:578.2px;top:583.15px;font-size:23.5px;color:#111;font-weight:400;-webkit-text-stroke:0.3px #111">12377</div>
<div class="t" style="left:726.5px;top:583.15px;font-size:23.5px;color:#111;font-weight:400;-webkit-text-stroke:0.3px #111">789 Lawrence St</div>
<div class="t" style="left:985px;top:583.15px;font-size:23.5px;color:#111;font-weight:400;-webkit-text-stroke:0.3px #111">Seattle</div>
<div class="t" style="left:1132.5px;top:583.15px;font-size:23.5px;color:#111;font-weight:400;-webkit-text-stroke:0.3px #111">WA</div>
<div class="t" style="right:23.700000000000045px;top:583.15px;font-size:23.5px;color:#111;font-weight:400;-webkit-text-stroke:0.3px #111">98787</div>
<div class="t" style="left:166px;top:617.90px;font-size:23.5px;color:#111;font-weight:400;-webkit-text-stroke:0.3px #111">Lola Brigeda</div>
<div class="t" style="left:413.5px;top:617.90px;font-size:23.5px;color:#111;font-weight:400;-webkit-text-stroke:0.3px #111">Director</div>
<div class="t" style="right:578.2px;top:617.90px;font-size:23.5px;color:#111;font-weight:400;-webkit-text-stroke:0.3px #111">12380</div>
<div class="t" style="left:726.5px;top:617.90px;font-size:23.5px;color:#111;font-weight:400;-webkit-text-stroke:0.3px #111">786 32nd Ave</div>
<div class="t" style="left:985px;top:617.90px;font-size:23.5px;color:#111;font-weight:400;-webkit-text-stroke:0.3px #111">Federal Way</div>
<div class="t" style="left:1132.5px;top:617.90px;font-size:23.5px;color:#111;font-weight:400;-webkit-text-stroke:0.3px #111">WA</div>
<div class="t" style="right:23.700000000000045px;top:617.90px;font-size:23.5px;color:#111;font-weight:400;-webkit-text-stroke:0.3px #111">97852</div>
<div class="t" style="left:166px;top:652.65px;font-size:23.5px;color:#111;font-weight:400;-webkit-text-stroke:0.3px #111">Beau Handford</div>
<div class="t" style="left:413.5px;top:652.65px;font-size:23.5px;color:#111;font-weight:400;-webkit-text-stroke:0.3px #111">HR</div>
<div class="t" style="right:578.2px;top:652.65px;font-size:23.5px;color:#111;font-weight:400;-webkit-text-stroke:0.3px #111">12383</div>
<div class="t" style="left:726.5px;top:652.65px;font-size:23.5px;color:#111;font-weight:400;-webkit-text-stroke:0.3px #111">3345 Curtis Rd</div>
<div class="t" style="left:985px;top:652.65px;font-size:23.5px;color:#111;font-weight:400;-webkit-text-stroke:0.3px #111">Tacoma</div>
<div class="t" style="left:1132.5px;top:652.65px;font-size:23.5px;color:#111;font-weight:400;-webkit-text-stroke:0.3px #111">WA</div>
<div class="t" style="right:23.700000000000045px;top:652.65px;font-size:23.5px;color:#111;font-weight:400;-webkit-text-stroke:0.3px #111">96589</div>
<div class="t" style="left:166px;top:687.40px;font-size:23.5px;color:#111;font-weight:400;-webkit-text-stroke:0.3px #111">Betty Friedan</div>
<div class="t" style="left:413.5px;top:687.40px;font-size:23.5px;color:#111;font-weight:400;-webkit-text-stroke:0.3px #111">HR</div>
<div class="t" style="right:578.2px;top:687.40px;font-size:23.5px;color:#111;font-weight:400;-webkit-text-stroke:0.3px #111">12386</div>
<div class="t" style="left:726.5px;top:687.40px;font-size:23.5px;color:#111;font-weight:400;-webkit-text-stroke:0.3px #111">1798 SW 45th St</div>
<div class="t" style="left:985px;top:687.40px;font-size:23.5px;color:#111;font-weight:400;-webkit-text-stroke:0.3px #111">Kent</div>
<div class="t" style="left:1132.5px;top:687.40px;font-size:23.5px;color:#111;font-weight:400;-webkit-text-stroke:0.3px #111">WA</div>
<div class="t" style="right:23.700000000000045px;top:687.40px;font-size:23.5px;color:#111;font-weight:400;-webkit-text-stroke:0.3px #111">98116</div>
<div class="t" style="left:166px;top:722.15px;font-size:23.5px;color:#111;font-weight:400;-webkit-text-stroke:0.3px #111">Gabe Givens</div>
<div class="t" style="left:413.5px;top:722.15px;font-size:23.5px;color:#111;font-weight:400;-webkit-text-stroke:0.3px #111">HR</div>
<div class="t" style="right:578.2px;top:722.15px;font-size:23.5px;color:#111;font-weight:400;-webkit-text-stroke:0.3px #111">12389</div>
<div class="t" style="left:726.5px;top:722.15px;font-size:23.5px;color:#111;font-weight:400;-webkit-text-stroke:0.3px #111">555 Kavanaugh Blvd</div>
<div class="t" style="left:985px;top:722.15px;font-size:23.5px;color:#111;font-weight:400;-webkit-text-stroke:0.3px #111">Auburn</div>
<div class="t" style="left:1132.5px;top:722.15px;font-size:23.5px;color:#111;font-weight:400;-webkit-text-stroke:0.3px #111">WA</div>
<div class="t" style="right:23.700000000000045px;top:722.15px;font-size:23.5px;color:#111;font-weight:400;-webkit-text-stroke:0.3px #111">98117</div>
<div class="t" style="left:166px;top:756.90px;font-size:23.5px;color:#111;font-weight:400;-webkit-text-stroke:0.3px #111">James Joyce</div>
<div class="t" style="left:413.5px;top:756.90px;font-size:23.5px;color:#111;font-weight:400;-webkit-text-stroke:0.3px #111">HR</div>
<div class="t" style="right:578.2px;top:756.90px;font-size:23.5px;color:#111;font-weight:400;-webkit-text-stroke:0.3px #111">12392</div>
<div class="t" style="left:726.5px;top:756.90px;font-size:23.5px;color:#111;font-weight:400;-webkit-text-stroke:0.3px #111">6805 Cantrell Rd</div>
<div class="t" style="left:985px;top:756.90px;font-size:23.5px;color:#111;font-weight:400;-webkit-text-stroke:0.3px #111">Puyallup</div>
<div class="t" style="left:1132.5px;top:756.90px;font-size:23.5px;color:#111;font-weight:400;-webkit-text-stroke:0.3px #111">WA</div>
<div class="t" style="right:23.700000000000045px;top:756.90px;font-size:23.5px;color:#111;font-weight:400;-webkit-text-stroke:0.3px #111">98287</div>
<div class="t" style="left:166px;top:791.65px;font-size:23.5px;color:#111;font-weight:400;-webkit-text-stroke:0.3px #111">Sara Hanggler</div>
<div class="t" style="left:413.5px;top:791.65px;font-size:23.5px;color:#111;font-weight:400;-webkit-text-stroke:0.3px #111">HR</div>
<div class="t" style="right:578.2px;top:791.65px;font-size:23.5px;color:#111;font-weight:400;-webkit-text-stroke:0.3px #111">12395</div>
<div class="t" style="left:726.5px;top:791.65px;font-size:23.5px;color:#111;font-weight:400;-webkit-text-stroke:0.3px #111">7121 Baseline Rd</div>
<div class="t" style="left:985px;top:791.65px;font-size:23.5px;color:#111;font-weight:400;-webkit-text-stroke:0.3px #111">Auburn</div>
<div class="t" style="left:1132.5px;top:791.65px;font-size:23.5px;color:#111;font-weight:400;-webkit-text-stroke:0.3px #111">WA</div>
<div class="t" style="right:23.700000000000045px;top:791.65px;font-size:23.5px;color:#111;font-weight:400;-webkit-text-stroke:0.3px #111">98404</div>
<div class="t" style="left:166px;top:826.40px;font-size:23.5px;color:#111;font-weight:400;-webkit-text-stroke:0.3px #111">Grace Fitzgerald</div>
<div class="t" style="left:413.5px;top:826.40px;font-size:23.5px;color:#111;font-weight:400;-webkit-text-stroke:0.3px #111">IT</div>
<div class="t" style="right:578.2px;top:826.40px;font-size:23.5px;color:#111;font-weight:400;-webkit-text-stroke:0.3px #111">12398</div>
<div class="t" style="left:726.5px;top:826.40px;font-size:23.5px;color:#111;font-weight:400;-webkit-text-stroke:0.3px #111">999 Main Ave</div>
<div class="t" style="left:985px;top:826.40px;font-size:23.5px;color:#111;font-weight:400;-webkit-text-stroke:0.3px #111">Tacoma</div>
<div class="t" style="left:1132.5px;top:826.40px;font-size:23.5px;color:#111;font-weight:400;-webkit-text-stroke:0.3px #111">WA</div>
<div class="t" style="right:23.700000000000045px;top:826.40px;font-size:23.5px;color:#111;font-weight:400;-webkit-text-stroke:0.3px #111">98714</div>
<div class="t" style="left:166px;top:861.15px;font-size:23.5px;color:#111;font-weight:400;-webkit-text-stroke:0.3px #111">Mary Bridge</div>
<div class="t" style="left:413.5px;top:861.15px;font-size:23.5px;color:#111;font-weight:400;-webkit-text-stroke:0.3px #111">IT</div>
<div class="t" style="right:578.2px;top:861.15px;font-size:23.5px;color:#111;font-weight:400;-webkit-text-stroke:0.3px #111">12401</div>
<div class="t" style="left:726.5px;top:861.15px;font-size:23.5px;color:#111;font-weight:400;-webkit-text-stroke:0.3px #111">7610 Geyer Springs</div>
<div class="t" style="left:985px;top:861.15px;font-size:23.5px;color:#111;font-weight:400;-webkit-text-stroke:0.3px #111">Kent</div>
<div class="t" style="left:1132.5px;top:861.15px;font-size:23.5px;color:#111;font-weight:400;-webkit-text-stroke:0.3px #111">WA</div>
<div class="t" style="right:23.700000000000045px;top:861.15px;font-size:23.5px;color:#111;font-weight:400;-webkit-text-stroke:0.3px #111">98714</div>
<div class="t" style="left:166px;top:895.90px;font-size:23.5px;color:#111;font-weight:400;-webkit-text-stroke:0.3px #111">John Smith</div>
<div class="t" style="left:413.5px;top:895.90px;font-size:23.5px;color:#111;font-weight:400;-webkit-text-stroke:0.3px #111">IT</div>
<div class="t" style="right:578.2px;top:895.90px;font-size:23.5px;color:#111;font-weight:400;-webkit-text-stroke:0.3px #111">12404</div>
<div class="t" style="left:726.5px;top:895.90px;font-size:23.5px;color:#111;font-weight:400;-webkit-text-stroke:0.3px #111">1000 Main St</div>
<div class="t" style="left:985px;top:895.90px;font-size:23.5px;color:#111;font-weight:400;-webkit-text-stroke:0.3px #111">Auburn</div>
<div class="t" style="left:1132.5px;top:895.90px;font-size:23.5px;color:#111;font-weight:400;-webkit-text-stroke:0.3px #111">WA</div>
<div class="t" style="right:23.700000000000045px;top:895.90px;font-size:23.5px;color:#111;font-weight:400;-webkit-text-stroke:0.3px #111">98714</div>
<div class="t" style="left:166px;top:930.65px;font-size:23.5px;color:#111;font-weight:400;-webkit-text-stroke:0.3px #111">Pat Sutherland</div>
<div class="t" style="left:413.5px;top:930.65px;font-size:23.5px;color:#111;font-weight:400;-webkit-text-stroke:0.3px #111">IT</div>
<div class="t" style="right:578.2px;top:930.65px;font-size:23.5px;color:#111;font-weight:400;-webkit-text-stroke:0.3px #111">12407</div>
<div class="t" style="left:726.5px;top:930.65px;font-size:23.5px;color:#111;font-weight:400;-webkit-text-stroke:0.3px #111">1 West Market Rd</div>
<div class="t" style="left:985px;top:930.65px;font-size:23.5px;color:#111;font-weight:400;-webkit-text-stroke:0.3px #111">Auburn</div>
<div class="t" style="left:1132.5px;top:930.65px;font-size:23.5px;color:#111;font-weight:400;-webkit-text-stroke:0.3px #111">WA</div>
<div class="t" style="right:23.700000000000045px;top:930.65px;font-size:23.5px;color:#111;font-weight:400;-webkit-text-stroke:0.3px #111">98714</div>
<div class="t" style="left:166px;top:965.40px;font-size:23.5px;color:#111;font-weight:400;-webkit-text-stroke:0.3px #111">Jack Herman Regan</div>
<div class="t" style="left:413.5px;top:965.40px;font-size:23.5px;color:#111;font-weight:400;-webkit-text-stroke:0.3px #111">Marketing</div>
<div class="t" style="right:578.2px;top:965.40px;font-size:23.5px;color:#111;font-weight:400;-webkit-text-stroke:0.3px #111">12410</div>
<div class="t" style="left:726.5px;top:965.40px;font-size:23.5px;color:#111;font-weight:400;-webkit-text-stroke:0.3px #111">134 Markell Rd</div>
<div class="t" style="left:985px;top:965.40px;font-size:23.5px;color:#111;font-weight:400;-webkit-text-stroke:0.3px #111">Seattle</div>
<div class="t" style="left:1132.5px;top:965.40px;font-size:23.5px;color:#111;font-weight:400;-webkit-text-stroke:0.3px #111">WA</div>
<div class="t" style="right:23.700000000000045px;top:965.40px;font-size:23.5px;color:#111;font-weight:400;-webkit-text-stroke:0.3px #111">98714</div>
<div class="t" style="left:166px;top:1000.15px;font-size:23.5px;color:#111;font-weight:400;-webkit-text-stroke:0.3px #111">John Smith</div>
<div class="t" style="left:413.5px;top:1000.15px;font-size:23.5px;color:#111;font-weight:400;-webkit-text-stroke:0.3px #111">Research</div>
<div class="t" style="right:578.2px;top:1000.15px;font-size:23.5px;color:#111;font-weight:400;-webkit-text-stroke:0.3px #111">12413</div>
<div class="t" style="left:726.5px;top:1000.15px;font-size:23.5px;color:#111;font-weight:400;-webkit-text-stroke:0.3px #111">8435 Salem Ln</div>
<div class="t" style="left:985px;top:1000.15px;font-size:23.5px;color:#111;font-weight:400;-webkit-text-stroke:0.3px #111">Tacoma</div>
<div class="t" style="left:1132.5px;top:1000.15px;font-size:23.5px;color:#111;font-weight:400;-webkit-text-stroke:0.3px #111">WA</div>
<div class="t" style="right:23.700000000000045px;top:1000.15px;font-size:23.5px;color:#111;font-weight:400;-webkit-text-stroke:0.3px #111">98714</div>
<div class="t" style="left:166px;top:1034.90px;font-size:23.5px;color:#111;font-weight:400;-webkit-text-stroke:0.3px #111">Chris Fields</div>
<div class="t" style="left:413.5px;top:1034.90px;font-size:23.5px;color:#111;font-weight:400;-webkit-text-stroke:0.3px #111">Research</div>
<div class="t" style="right:578.2px;top:1034.90px;font-size:23.5px;color:#111;font-weight:400;-webkit-text-stroke:0.3px #111">12416</div>
<div class="t" style="left:726.5px;top:1034.90px;font-size:23.5px;color:#111;font-weight:400;-webkit-text-stroke:0.3px #111">84 Wades Way</div>
<div class="t" style="left:985px;top:1034.90px;font-size:23.5px;color:#111;font-weight:400;-webkit-text-stroke:0.3px #111">Tacoma</div>
<div class="t" style="left:1132.5px;top:1034.90px;font-size:23.5px;color:#111;font-weight:400;-webkit-text-stroke:0.3px #111">WA</div>
<div class="t" style="right:23.700000000000045px;top:1034.90px;font-size:23.5px;color:#111;font-weight:400;-webkit-text-stroke:0.3px #111">98714</div>
<div class="t" style="left:166px;top:1069.65px;font-size:23.5px;color:#111;font-weight:400;-webkit-text-stroke:0.3px #111">Laila Green</div>
<div class="t" style="left:413.5px;top:1069.65px;font-size:23.5px;color:#111;font-weight:400;-webkit-text-stroke:0.3px #111">Research</div>
<div class="t" style="right:578.2px;top:1069.65px;font-size:23.5px;color:#111;font-weight:400;-webkit-text-stroke:0.3px #111">12419</div>
<div class="t" style="left:726.5px;top:1069.65px;font-size:23.5px;color:#111;font-weight:400;-webkit-text-stroke:0.3px #111">564 Buckingham Pl</div>
<div class="t" style="left:985px;top:1069.65px;font-size:23.5px;color:#111;font-weight:400;-webkit-text-stroke:0.3px #111">Seattle</div>
<div class="t" style="left:1132.5px;top:1069.65px;font-size:23.5px;color:#111;font-weight:400;-webkit-text-stroke:0.3px #111">WA</div>
<div class="t" style="right:23.700000000000045px;top:1069.65px;font-size:23.5px;color:#111;font-weight:400;-webkit-text-stroke:0.3px #111">98714</div>
<div class="a" style="left:160px;top:435px;width:1117px;height:2px;background:#383838"></div>
<div class="a" style="left:160px;top:469px;width:1117px;height:2px;background:#383838"></div>
<div class="a" style="left:160px;top:504px;width:1117px;height:2px;background:#383838"></div>
<div class="a" style="left:160px;top:539px;width:1117px;height:2px;background:#383838"></div>
<div class="a" style="left:160px;top:574px;width:1117px;height:2px;background:#383838"></div>
<div class="a" style="left:160px;top:609px;width:1117px;height:2px;background:#383838"></div>
<div class="a" style="left:160px;top:643px;width:1117px;height:2px;background:#383838"></div>
<div class="a" style="left:160px;top:678px;width:1117px;height:2px;background:#383838"></div>
<div class="a" style="left:160px;top:713px;width:1117px;height:2px;background:#383838"></div>
<div class="a" style="left:160px;top:747px;width:1117px;height:2px;background:#383838"></div>
<div class="a" style="left:160px;top:782px;width:1117px;height:2px;background:#383838"></div>
<div class="a" style="left:160px;top:817px;width:1117px;height:2px;background:#383838"></div>
<div class="a" style="left:160px;top:852px;width:1117px;height:2px;background:#383838"></div>
<div class="a" style="left:160px;top:887px;width:1117px;height:2px;background:#383838"></div>
<div class="a" style="left:160px;top:921px;width:1117px;height:2px;background:#383838"></div>
<div class="a" style="left:160px;top:956px;width:1117px;height:2px;background:#383838"></div>
<div class="a" style="left:160px;top:991px;width:1117px;height:2px;background:#383838"></div>
<div class="a" style="left:160px;top:1025px;width:1117px;height:2px;background:#383838"></div>
<div class="a" style="left:160px;top:1060px;width:1117px;height:2px;background:#383838"></div>
<div class="a" style="left:160px;top:1095px;width:1117px;height:2px;background:#383838"></div>
<div class="a" style="left:160px;top:401.0px;width:2px;height:684.0px;background:#383838"></div>
<div class="a" style="left:407px;top:401.0px;width:2px;height:684.0px;background:#383838"></div>
<div class="a" style="left:571px;top:401.0px;width:2px;height:684.0px;background:#383838"></div>
<div class="a" style="left:721px;top:401.0px;width:2px;height:684.0px;background:#383838"></div>
<div class="a" style="left:979px;top:401.0px;width:2px;height:684.0px;background:#383838"></div>
<div class="a" style="left:1127px;top:401.0px;width:2px;height:684.0px;background:#383838"></div>
<div class="a" style="left:1199px;top:401.0px;width:2px;height:684.0px;background:#383838"></div>
<div class="a" style="left:1275px;top:401.0px;width:2px;height:684.0px;background:#383838"></div>
<div class="a" style="left:153.5px;top:881.5px;width:423.5px;height:47px;border:5px solid #f2b61f;border-radius:9px"></div>
<div class="a" style="left:153.5px;top:985.5px;width:423.5px;height:46.5px;border:5px solid #f2b61f;border-radius:9px"></div>
<div class="a" style="left:0px;top:1085px;width:1295px;height:43px;background:#e6e6e6"></div>
<div class="a" style="left:0px;top:1085px;width:1295px;height:2px;background:#bdbdbd"></div>
<div class="a" style="left:0px;top:1123px;width:1295px;height:5px;background:#f0f0f0"></div>
<svg style="left:32px;top:1097px" width="10" height="14" viewBox="0 0 10 14"><path d="M8 1 L2 7 L8 13 Z" fill="#c4c4c4"/></svg>
<svg style="left:73px;top:1097px" width="10" height="14" viewBox="0 0 10 14"><path d="M2 1 L8 7 L2 13 Z" fill="#c4c4c4"/></svg>
<div class="a" style="left:140px;top:1090px;width:1.5px;height:30px;background:#bdbdbd"></div>
<div class="t" style="left:163px;top:1092.60px;font-size:23.5px;color:#595959;font-weight:400;letter-spacing:-0.05px">Compare two columns</div>
<div class="a" style="left:419.5px;top:1080.5px;width:335.5px;height:47px;background:#fff;border:5px solid #e02020;border-radius:10px"></div>
<div class="t" style="left:437px;top:1092.60px;font-size:23.5px;color:#217346;font-weight:700;letter-spacing:0.12px">VLOOKUP multiple criteria</div>
<svg style="left:797px;top:1091px" width="28" height="28" viewBox="0 0 28 28"><circle cx="14" cy="14" r="12.5" fill="none" stroke="#8a8a8a" stroke-width="1.5"/><path d="M14 7.5 V20.5 M7.5 14 H20.5" stroke="#777" stroke-width="1.8"/></svg>
</body></html>
